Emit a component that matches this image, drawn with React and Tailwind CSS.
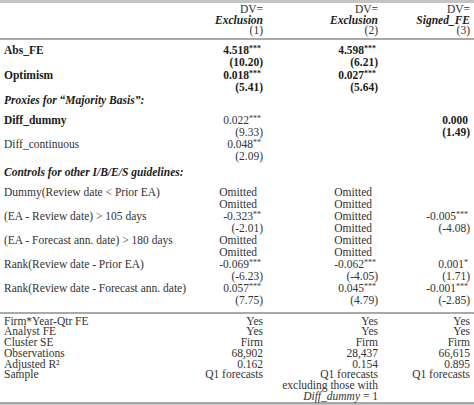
const COLS = "grid grid-cols-[1fr_60px_115px_92px] px-[4px]";

const BLOCKS = [
  { label: "Abs_FE", bold: true, cells: [["4.518", "***", "(10.20)", true], ["4.598", "***", "(6.21)", true], null], mt: "mt-0" },
  { label: "Optimism", bold: true, cells: [["0.018", "***", "(5.41)", true], ["0.027", "***", "(5.64)", true], null], mt: "mt-[1px]" },
  { section: "Proxies for \u201cMajority Basis\u201d:", mt: "mt-[1px]" },
  { label: "Diff_dummy", bold: true, cells: [["0.022", "***", "(9.33)"], null, ["0.000", "", "(1.49)", true]], mt: "mt-[8px]" },
  { label: "Diff_continuous", cells: [["0.048", "**", "(2.09)"], null, null], mt: "mt-0" },
  { section: "Controls for other I/B/E/S guidelines:", mt: "mt-[4px]" },
  { label: "Dummy(Review date < Prior EA)", cells: ["omit", "omit", null], mt: "mt-[8px]" },
  { label: "(EA - Review date) > 105 days", cells: [["-0.323", "**", "(-2.01)"], "omit", ["-0.005", "***", "(-4.08)"]], mt: "mt-0" },
  { label: "(EA - Forecast ann. date) > 180 days", cells: ["omit", "omit", null], mt: "mt-0" },
  { label: "Rank(Review date - Prior EA)", cells: [["-0.069", "***", "(-6.23)"], ["-0.062", "***", "(-4.05)"], ["0.001", "*", "(1.71)"]], mt: "mt-0" },
  { label: "Rank(Review date - Forecast ann. date)", cells: [["0.057", "***", "(7.75)"], ["0.045", "***", "(4.79)"], ["-0.001", "***", "(-2.85)"]], mt: "mt-0" },
];

const FOOT = [
  ["Firm*Year-Qtr FE", "Yes", "Yes", "Yes"],
  ["Analyst FE", "Yes", "Yes", "Yes"],
  ["Cluster SE", "Firm", "Firm", "Firm"],
  ["Observations", "68,902", "28,437", "66,615"],
  ["Adjusted R\u00b2", "0.162", "0.154", "0.895"],
  ["Sample", "Q1 forecasts", "Q1 forecasts", "Q1 forecasts"],
  ["", "", "excluding those with", ""],
  ["", "", "dd", ""],
];

function Cell({ children, className = "" }) {
  return <div className={"text-right whitespace-nowrap " + className}>{children}</div>;
}

function Stars({ s }) {
  if (!s) return null;
  return <span className="align-[3px] text-[8px] leading-none">{s}</span>;
}

function Block({ b }) {
  if (b.section) {
    return (
      <div className={COLS + " " + b.mt}>
        <div className="col-span-4 whitespace-nowrap font-bold italic text-[#1c1c1c]">{b.section}</div>
      </div>
    );
  }
  const top = b.cells.map((c, i) => {
    if (!c) return <Cell key={i} />;
    if (c === "omit") return <Cell key={i} className="pr-[6px]">Omitted</Cell>;
    return (
      <Cell key={i} className={"pr-[2px] " + (c[3] ? "font-bold text-[#1c1c1c]" : "")}>
        {c[0]}
        <Stars s={c[1]} />
      </Cell>
    );
  });
  const bottom = b.cells.map((c, i) => {
    if (!c) return <Cell key={i} />;
    if (c === "omit") return <Cell key={i} className="pr-[6px]">Omitted</Cell>;
    return (
      <Cell key={i} className={c[3] ? "font-bold text-[#1c1c1c]" : ""}>
        {c[2]}
      </Cell>
    );
  });
  return (
    <div className={COLS + " " + b.mt}>
      <div className={"whitespace-nowrap " + (b.bold ? "font-bold text-[#1c1c1c]" : "")}>{b.label}</div>
      {top}
      <div />
      {bottom}
    </div>
  );
}

export default function App() {
  return (
    <div
      className="w-[474px] h-[405px] overflow-hidden bg-white text-[#333] text-[11.5px]"
      style={{ fontFamily: '"Liberation Serif", "Times New Roman", serif' }}
    >
      <div className="h-[3px] bg-[#c4c4c4]" />

      {/* Header */}
      <div className={COLS + " leading-[10.5px] pt-[1px]"}>
        <div />
        <Cell>DV=</Cell>
        <Cell>DV=</Cell>
        <Cell>DV=</Cell>
        <div />
        <Cell className="font-bold italic text-[#1c1c1c]">Exclusion</Cell>
        <Cell className="font-bold italic text-[#1c1c1c]">Exclusion</Cell>
        <Cell className="font-bold italic text-[#1c1c1c]">Signed_FE</Cell>
        <div />
        <Cell>(1)</Cell>
        <Cell>(2)</Cell>
        <Cell>(3)</Cell>
      </div>
      <div className="mt-[2px] h-[2px] bg-[#a9a9a9]" />

      {/* Body */}
      <div className="leading-[12px] pt-[4px] pb-[6px]">
        {BLOCKS.map((b, i) => (
          <Block key={i} b={b} />
        ))}
      </div>
      <div className="h-[2px] bg-[#a9a9a9]" />

      {/* Footer */}
      <div className={COLS + " leading-[10.8px] pt-[2px]"}>
        {FOOT.map((r, i) => (
          <div key={i} className="contents">
            <div className="whitespace-nowrap">{r[0]}</div>
            <Cell>{r[1]}</Cell>
            <Cell>
              {r[2] === "dd" ? (
                <span>
                  <span className="italic">Diff_dummy</span> = 1
                </span>
              ) : (
                r[2]
              )}
            </Cell>
            <Cell>{r[3]}</Cell>
          </div>
        ))}
      </div>
      <div className="h-[2px] bg-[#a9a9a9]" />
      <div className="h-[6px] bg-[#c4c4c4]" />
    </div>
  );
}
